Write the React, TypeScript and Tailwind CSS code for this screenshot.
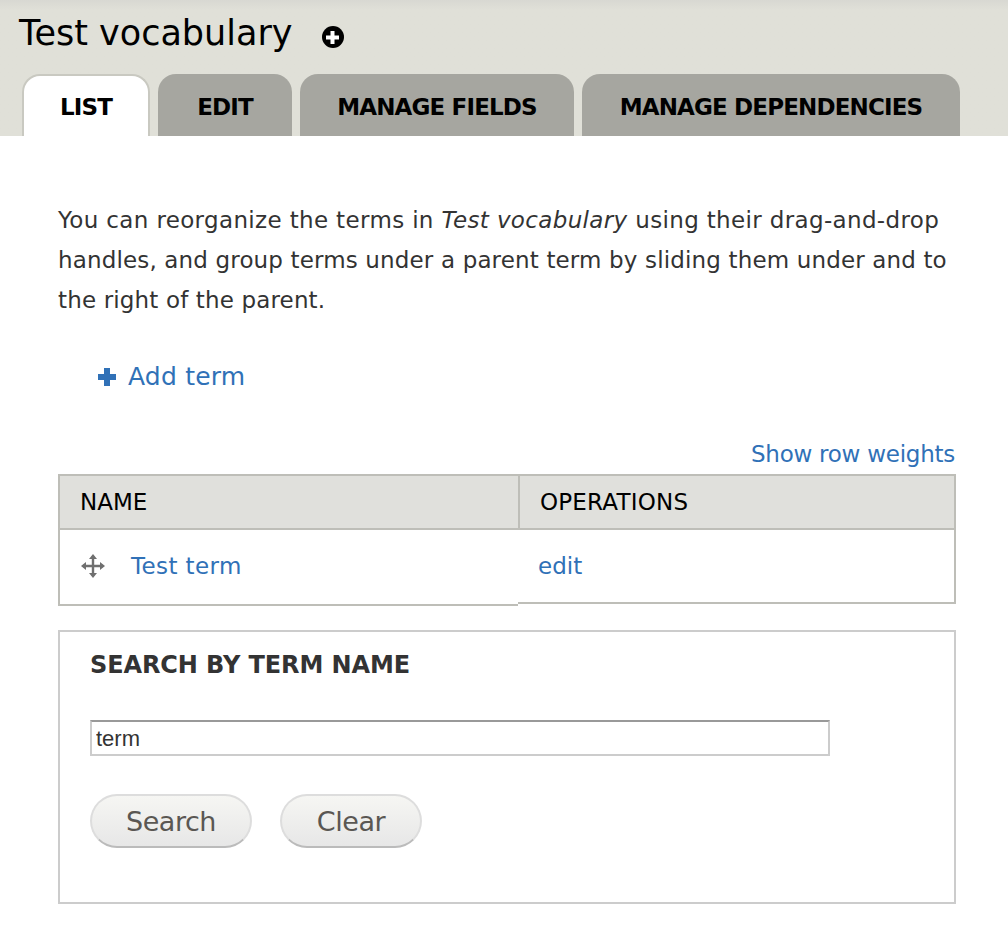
const sans = "font-['DejaVu_Sans','Liberation_Sans',sans-serif]";

function Tab({ label, active, width }: { label: string; active?: boolean; width: string }) {
  return (
    <a
      className={`flex h-[62px] items-start justify-center rounded-t-[18px] text-[23px] leading-[30px] font-bold tracking-[-0.85px] text-black ${width} ${
        active ? "border-2 border-b-0 border-[#c9c9c1] bg-white pt-[16px]" : "bg-[#a6a6a0] pt-[18px]"
      }`}
    >
      {label}
    </a>
  );
}

function PlusMark({ size, bar, className }: { size: number; bar: number; className: string }) {
  const a = (size - bar) / 2;
  return (
    <svg width={size} height={size} viewBox={`0 0 ${size} ${size}`} className={className} aria-hidden="true">
      <path
        d={`M${a} 0h${bar}v${a}h${a}v${bar}h-${a}v${a}h-${bar}v-${a}h-${a}v-${bar}h${a}z`}
        fill="currentColor"
      />
    </svg>
  );
}

function MoveHandle() {
  return (
    <svg width="26" height="26" viewBox="0 0 26 26" className="blur-[0.5px]" aria-hidden="true">
      <path d="M13 3v20M3 13h20" stroke="#6f6f6f" strokeWidth="2.4" fill="none" />
      <path d="M13 1l4 5H9zM13 25l-4-5h8zM1 13l5-4v8zM25 13l-5 4V9z" fill="#6f6f6f" />
    </svg>
  );
}

export default function App() {
  return (
    <div className={`min-h-[938px] bg-white ${sans}`}>
      <header className="h-[136px] bg-gradient-to-b from-[#d8d8d2] from-0% to-[#e0e0d8] to-[10px] pl-[22px]">
        <div className="flex h-[74px] items-start">
          <h1 className="-ml-[3px] pt-[11px] text-[35px] leading-[44px] font-normal text-black">Test vocabulary</h1>
          <span className="mt-[26px] ml-[29px] flex h-[22px] w-[22px] items-center justify-center rounded-full bg-black">
            <PlusMark size={13} bar={4} className="text-white" />
          </span>
        </div>
        <nav className="flex gap-2">
          <Tab label="LIST" active width="w-[128px]" />
          <Tab label="EDIT" width="w-[134px]" />
          <Tab label="MANAGE FIELDS" width="w-[274px]" />
          <Tab label="MANAGE DEPENDENCIES" width="w-[378px]" />
        </nav>
      </header>

      <main className="pr-[52px] pl-[58px]">
        <p className="pt-[64px] text-[23px] leading-[40px] text-[#333]">
          <span className="tracking-[0.35px]">
            You can reorganize the terms in <em>Test vocabulary</em> using their drag-and-drop
          </span>
          <br />
          <span className="tracking-[0.15px]">handles, and group terms under a parent term by sliding them under and to</span>
          <br />
          <span className="tracking-[0.15px]">the right of the parent.</span>
        </p>

        <a className="mt-[37px] ml-[40px] flex h-[40px] items-center gap-[12px] text-[25px] tracking-[0.2px] text-[#3071b7]">
          <PlusMark size={18} bar={6} className="text-[#3071b7]" />
          Add term
        </a>

        <div className="mt-[37px] pr-[1px] text-right text-[23px] leading-[40px] tracking-[-0.25px] text-[#3071b7]">Show row weights</div>

        <table className="w-full border-separate border-spacing-0">
          <thead>
            <tr className="h-[56px] bg-[#e0e0dc] text-left text-[23px] text-black">
              <th className="w-[460px] border-y-2 border-l-2 border-[#bebeb8] pl-[20px] font-normal">NAME</th>
              <th className="border-2 border-[#bebeb8] pl-[20px] font-normal tracking-[0.2px]">OPERATIONS</th>
            </tr>
          </thead>
          <tbody>
            <tr>
              <td className="h-[76px] border-b-2 border-l-2 border-[#bebeb8] align-top">
                <div className="flex items-center pt-[22px] pl-[20px] text-[23px] leading-[28px] tracking-[0.4px] text-[#3071b7]">
                  <MoveHandle />
                  <span className="ml-[25px]">Test term</span>
                </div>
              </td>
              <td className="h-[76px] align-top">
                <div className="h-[74px] border-r-2 border-b-2 border-[#bebeb8] pt-[22px] pl-[20px] text-[23px] leading-[28px] text-[#3071b7]">edit</div>
              </td>
            </tr>
          </tbody>
        </table>

        <section className="mt-[24px] h-[274px] border-2 border-[#ccc] pt-[18px] pl-[30px]">
          <h2 className="text-[24px] leading-[30px] font-bold tracking-[-0.1px] text-[#333]">SEARCH BY TERM NAME</h2>
          <input
            readOnly
            value="term"
            className="mt-[40px] block h-[36px] w-[740px] border-2 border-[#ccc] border-t-[#999] pt-[1px] pl-[4px] font-['Liberation_Sans',sans-serif] text-[22px] text-[#333] outline-none"
          />
          <div className="mt-[38px] flex gap-[28px]">
            <button className="h-[54px] w-[162px] rounded-full border-2 border-[#ddd] border-b-[#bbb] bg-gradient-to-b from-[#f6f6f3] to-[#e7e7e7] pt-[3px] text-[27px] tracking-[-0.45px] text-[#5a5753]">Search</button>
            <button className="h-[54px] w-[142px] rounded-full border-2 border-[#ddd] border-b-[#bbb] bg-gradient-to-b from-[#f6f6f3] to-[#e7e7e7] pt-[3px] text-[27px] tracking-[-0.45px] text-[#5a5753]">Clear</button>
          </div>
        </section>
      </main>
    </div>
  );
}
